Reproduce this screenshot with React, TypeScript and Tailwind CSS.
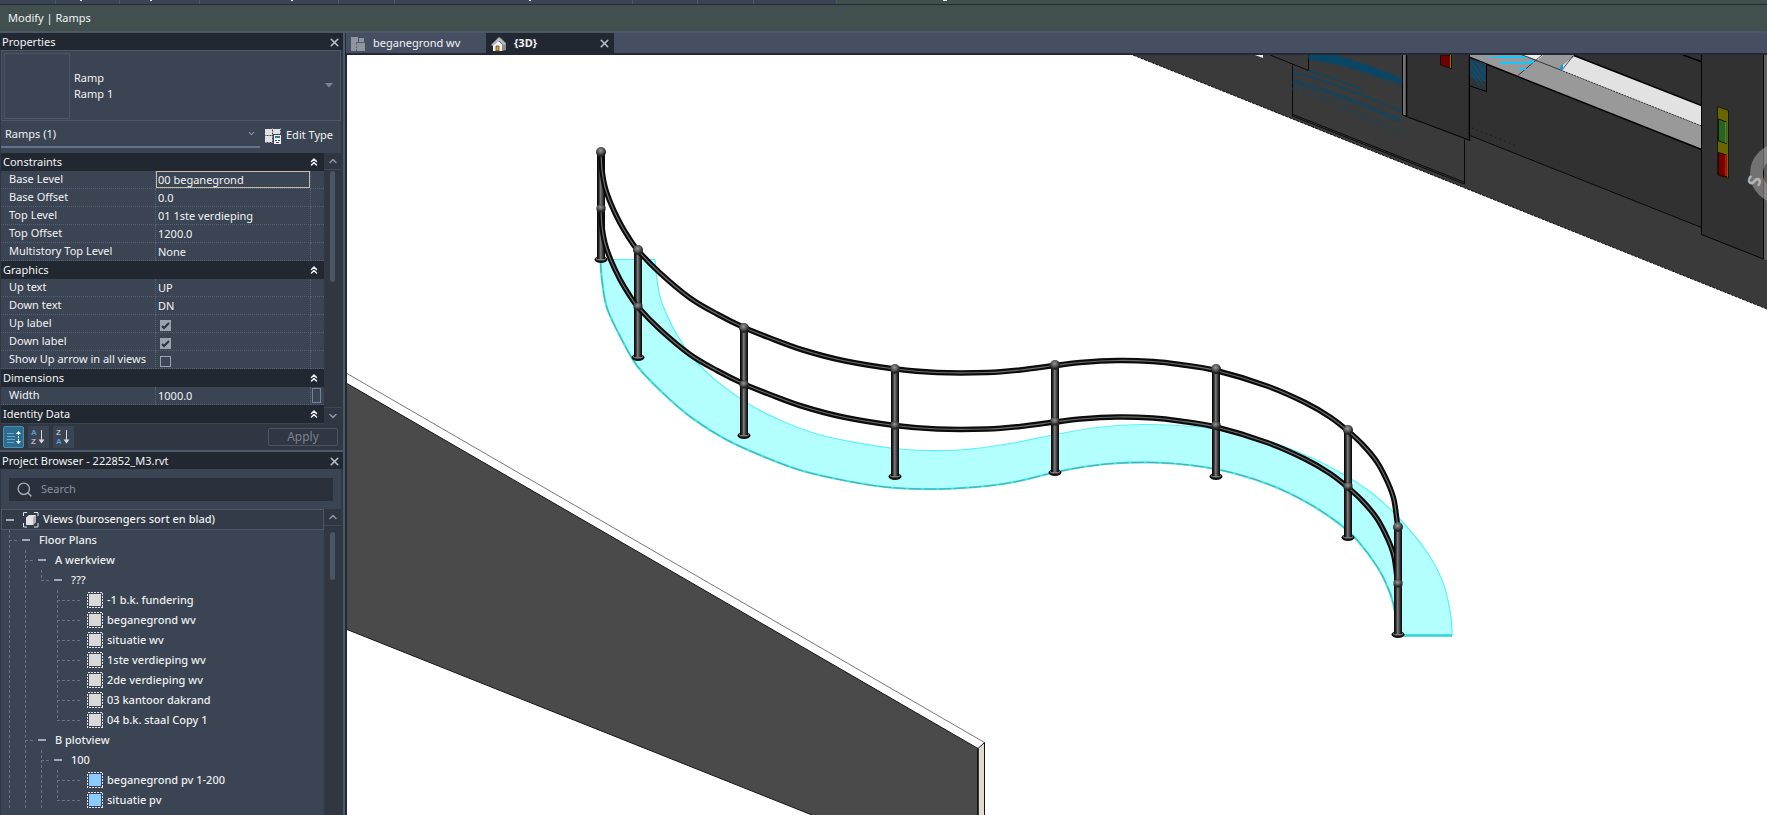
import React from "react";
import { ChevronsUp, ChevronDown, ChevronUp, Search, X } from "lucide-react";

type Row = {
  label: string;
  value?: string;
  checked?: boolean;
  active?: boolean;
  picker?: boolean;
};

const groups: { name: string; rows: Row[] }[] = [
  {
    name: "Constraints",
    rows: [
      { label: "Base Level", value: "00 beganegrond", active: true },
      { label: "Base Offset", value: "0.0" },
      { label: "Top Level", value: "01 1ste verdieping" },
      { label: "Top Offset", value: "1200.0" },
      { label: "Multistory Top Level", value: "None" },
    ],
  },
  {
    name: "Graphics",
    rows: [
      { label: "Up text", value: "UP" },
      { label: "Down text", value: "DN" },
      { label: "Up label", checked: true },
      { label: "Down label", checked: true },
      { label: "Show Up arrow in all views", checked: false },
    ],
  },
  { name: "Dimensions", rows: [{ label: "Width", value: "1000.0", picker: true }] },
  { name: "Identity Data", rows: [] },
];

type Node = {
  text: string;
  depth: number;
  through: number[];
  last?: boolean;
  icon?: "grey" | "blue";
};

const nodes: Node[] = [
  { text: "Floor Plans", depth: 1, through: [] },
  { text: "A werkview", depth: 2, through: [0] },
  { text: "???", depth: 3, through: [0, 1], last: true },
  { text: "-1 b.k. fundering", depth: 4, through: [0, 1], icon: "grey" },
  { text: "beganegrond wv", depth: 4, through: [0, 1], icon: "grey" },
  { text: "situatie wv", depth: 4, through: [0, 1], icon: "grey" },
  { text: "1ste verdieping wv", depth: 4, through: [0, 1], icon: "grey" },
  { text: "2de verdieping wv", depth: 4, through: [0, 1], icon: "grey" },
  { text: "03 kantoor dakrand", depth: 4, through: [0, 1], icon: "grey" },
  { text: "04 b.k. staal Copy 1", depth: 4, through: [0, 1], icon: "grey", last: true },
  { text: "B plotview", depth: 2, through: [0] },
  { text: "100", depth: 3, through: [0, 1] },
  { text: "beganegrond pv 1-200", depth: 4, through: [0, 1, 2], icon: "blue" },
  { text: "situatie pv", depth: 4, through: [0, 1, 2], icon: "blue", last: true },
];

function Guides({ node }: { node: Node }) {
  const own = 9 + (node.depth - 1) * 16;
  const width = node.icon ? own + 30 : own + 13;
  return (
    <svg width={width} height="20" className="shrink-0" stroke="#6b7280" strokeDasharray="3 2" shapeRendering="crispEdges" aria-hidden="true">
      {node.through.map((k) => (
        <path key={k} d={`M${9.5 + k * 16} 0V20`} />
      ))}
      <path d={`M${own + 0.5} 0V${node.last ? 11 : 20}`} />
      <path d={`M${own} 10.5H${own + (node.icon ? 25 : 9)}`} />
    </svg>
  );
}

function Minus() {
  return <span className="h-[2px] w-[8px] shrink-0 bg-[#a3abb8]" />;
}

function SheetIcon({ kind }: { kind: "grey" | "blue" }) {
  return (
    <svg width="16" height="16" className="shrink-0" shapeRendering="crispEdges" aria-hidden="true">
      <rect x="0.5" y="0.5" width="15" height="15" fill="none" stroke="#e5e5e5" strokeDasharray="2 1" />
      <rect x="2" y="2" width="12" height="12" fill={kind === "grey" ? "#d9d9d9" : "#8accff"} />
    </svg>
  );
}

const slug = (s: string) => s.toLowerCase().replace(/[^a-z0-9]+/g, "-");

function PropertyTable() {
  return (
    <table className="w-full table-fixed border-separate border-spacing-0">
      <colgroup>
        <col />
        <col className="w-[155px]" />
        <col className="w-[13px]" />
      </colgroup>
      {groups.map((g) => (
        <tbody key={g.name}>
          <tr className="h-[18px] bg-[#222831]">
            <th colSpan={3} className="p-0 font-normal">
              <button className="flex h-[18px] w-full items-center justify-between pr-[4px] pl-[2px]">
                <span>{g.name}</span>
                <ChevronsUp size={12} strokeWidth={3} />
              </button>
            </th>
          </tr>
          {g.rows.map((r) => (
            <tr key={r.label} className="h-[18px]">
              <td className="border-r border-b border-dotted border-[#566070] p-0 pl-[8px]">
                <label htmlFor={slug(r.label)} className="block h-[17px] whitespace-nowrap leading-[16px]">
                  {r.label}
                </label>
              </td>
              <td className="border-r border-b border-dotted border-[#566070] p-0">
                {r.value !== undefined ? (
                  <input
                    id={slug(r.label)}
                    defaultValue={r.value}
                    className={
                      r.active
                        ? "block h-[17px] w-full border border-[#c8bda8] pl-[1px] leading-[14px] outline-none"
                        : "block h-[17px] w-full pl-[2px] leading-[16px] outline-none"
                    }
                  />
                ) : (
                  <span className="relative flex h-[17px] items-center pt-[3px] pl-[4px]">
                    <input
                      id={slug(r.label)}
                      type="checkbox"
                      defaultChecked={r.checked}
                      className="size-[11px] appearance-none border border-[#9ca3b0] checked:bg-[#9ca3b0]"
                    />
                    {r.checked && (
                      <svg viewBox="0 0 11 11" className="pointer-events-none absolute left-[4px] size-[11px]" fill="none" stroke="#2b323e" strokeWidth="2" aria-hidden="true">
                        <path d="M2 6l2 2 5-5" />
                      </svg>
                    )}
                  </span>
                )}
              </td>
              <td className="border-b border-dotted border-[#566070] p-0">
                {r.picker && (
                  <button aria-label="Associate parameter" className="ml-[1px] block h-[15px] w-[9px] border border-[#7482a0]" />
                )}
              </td>
            </tr>
          ))}
        </tbody>
      ))}
    </table>
  );
}

function PaneTitle({ children }: { children: React.ReactNode }) {
  return (
    <header className="flex h-[17px] shrink-0 items-center justify-between bg-[#222831] pt-[1px] pr-[2px] pl-[2px]">
      <h2>{children}</h2>
      <button aria-label="Close" className="text-[#b9bfc9]">
        <X size={13} strokeWidth={3} />
      </button>
    </header>
  );
}

function EditTypeIcon() {
  return (
    <svg width="16" height="16" shapeRendering="crispEdges" aria-hidden="true">
      <path d="M0 1h7v6H0zM8 1h7v5H8zM0 8h7v6H0z" fill="#e3e3e3" />
      <path d="M7 0v7M0 7.5h7M15.5 0v6M7.5 8v7M0 14.5h7" stroke="#8d9299" strokeDasharray="2 1" fill="none" />
      <path d="M9 7h7v9H9z" fill="#f2f2f2" />
      <path d="M10 8h5v2h-5z" fill="#2f76b5" />
      <path d="M10 12h2v1h-2zM13 12h2v1h-2zM11 14h3v1h-3z" fill="#44506a" />
    </svg>
  );
}

function SortIcon({ top, bottom }: { top: string; bottom: string }) {
  return (
    <svg width="21" height="22" className="font-['Liberation_Sans',sans-serif]" aria-hidden="true">
      <text x="3" y="9" fontSize="8" fontWeight="bold" fill={top === "A" ? "#5b9bd5" : "#b6bcc6"}>
        {top}
      </text>
      <text x="3" y="18" fontSize="8" fontWeight="bold" fill={bottom === "A" ? "#5b9bd5" : "#b6bcc6"}>
        {bottom}
      </text>
      <path d="M13.500 4v12" stroke="#d5d9df" strokeWidth="1" />
      <path d="M10.500 13.500h6l-3 4z" fill="#d5d9df" />
    </svg>
  );
}

function Properties() {
  return (
    <section className="flex flex-col bg-[#303642]">
      <PaneTitle>Properties</PaneTitle>
      <div className="mr-[2px] ml-[1px] bg-[#3b4452]">
        <button className="flex h-[71px] w-full items-center border border-[#4b5868] pl-[2px] text-left">
          <span className="size-[66px] border border-[#4b5868]" />
          <span className="grow pl-[4px] leading-[16px]">
            Ramp
            <br />
            Ramp 1
          </span>
          <svg width="8" height="5" className="mr-[7px]" aria-hidden="true">
            <path d="M0 0h8L4 4.500z" fill="#76849c" />
          </svg>
        </button>
        <div className="flex h-[32px] items-start">
          <div className="relative flex h-[27px] w-[259px] items-center border-b-2 border-[#64728c]">
            <select aria-label="Filter" className="h-[25px] w-full appearance-none pt-[2px] pl-[4px] outline-none">
              <option>Ramps (1)</option>
            </select>
            <ChevronDown size={9} strokeWidth={3} className="pointer-events-none absolute right-[4px] text-[#8592aa]" />
          </div>
          <button className="ml-[5px] flex h-[29px] items-center gap-[5px] whitespace-nowrap">
            <EditTypeIcon />
            Edit Type
          </button>
        </div>
        <div className="flex h-[271px]">
          <div className="min-w-0 grow">
            <PropertyTable />
          </div>
          <div className="flex w-[17px] shrink-0 flex-col items-center bg-[#303642]">
            <button aria-label="Scroll up" className="flex h-[17px] w-full items-center justify-center border-b border-[#3f4958] text-[#8c96a6]">
              <ChevronUp size={12} strokeWidth={3} />
            </button>
            <span className="mt-[1px] h-[111px] w-[5px] rounded-full bg-[#4b5563]" />
            <button aria-label="Scroll down" className="mt-auto flex h-[17px] w-full items-center justify-center border-t border-[#3f4958] text-[#8c96a6]">
              <ChevronDown size={12} strokeWidth={3} />
            </button>
          </div>
        </div>
      </div>
      <footer className="flex h-[26px] items-center gap-[4px] pr-[5px] pl-[3px]">
        <button aria-label="Group by category" className="rounded-xs border border-[#4790b4] bg-[#2f6d8e]">
          <svg width="19" height="20" aria-hidden="true">
            <path d="M3 6.500h7M3 9.500h8M3 12.500h8M3 15.500h7" stroke="#6aa5c3" />
            <path d="M14.500 6v9" stroke="#e8eef2" strokeDasharray="2 1" />
            <path d="M12 7h5l-2.500-3zM12 14h5l-2.500 3z" fill="#fff" />
          </svg>
        </button>
        <button aria-label="Sort ascending" className="bg-[#3b4452]">
          <SortIcon top="A" bottom="Z" />
        </button>
        <button aria-label="Sort descending" className="bg-[#3b4452]">
          <SortIcon top="Z" bottom="A" />
        </button>
        <button className="ml-auto h-[18px] w-[70px] rounded-xs border border-[#4b5563] text-xs leading-[16px] text-[#7b8290]">Apply</button>
      </footer>
    </section>
  );
}

function ProjectBrowser() {
  return (
    <section className="flex min-h-0 grow flex-col border-t-2 border-[#4b5a6b] bg-[#303642]">
      <PaneTitle>Project Browser - 222852_M3.rvt</PaneTitle>
      <div className="mr-[2px] ml-[1px] flex min-h-0 grow flex-col bg-[#3b4452]">
        <div className="mx-[8px] mt-[9px] mb-[8px] flex h-[23px] shrink-0 items-center gap-[8px] bg-[#2b313c] pl-[7px]">
          <Search size={17} strokeWidth={2} className="text-[#a7adb7]" />
          <input aria-label="Search" placeholder="Search" className="grow outline-none placeholder:text-[#8b919b]" />
        </div>
        <div className="flex min-h-0 grow">
          <ul className="min-w-0 grow overflow-hidden font-medium text-[#eceef0]">
            <li>
              <button className="flex h-[21px] w-full items-center border border-[#4b5868] bg-[#343b48] pl-[4px] whitespace-nowrap">
                <Minus />
                <svg width="16" height="16" className="mr-[4px] ml-[9px]" aria-hidden="true">
                  <path d="M0.500 4V0.500H4M11 0.500h4V4M15 11v4h-4M4 15H0.500v-4" fill="none" stroke="#dfe2e6" />
                  <path d="M3 5.500L6 3h7v7l-3 3H3z" fill="#e4e4e4" />
                  <path d="M10 5.500L13 3v7l-3 3z" fill="#aeb2b8" />
                </svg>
                Views (burosengers sort en blad)
              </button>
            </li>
            {nodes.map((n) => (
              <li key={n.text}>
                <button className="-ml-px flex h-[20px] items-center whitespace-nowrap">
                  <Guides node={n} />
                  <span className="flex items-center gap-[9px]">
                    {n.icon ? (
                      <span className="flex items-center gap-[4px]">
                        <SheetIcon kind={n.icon} />
                        {n.text}
                      </span>
                    ) : (
                      <>
                        <Minus />
                        {n.text}
                      </>
                    )}
                  </span>
                </button>
              </li>
            ))}
          </ul>
          <div className="flex w-[17px] shrink-0 flex-col items-center bg-[#303642]">
            <button aria-label="Scroll up" className="flex h-[17px] w-full items-center justify-center border-b border-[#3f4958] text-[#8c96a6]">
              <ChevronUp size={12} strokeWidth={3} />
            </button>
            <span className="mt-[6px] h-[48px] w-[5px] rounded-full bg-[#4b5563]" />
          </div>
        </div>
      </div>
    </section>
  );
}

type Point = [number, number];

// Catmull-Rom spline through the points, written as cubic segments.
function smooth(pts: Point[]) {
  let d = `M${pts[0][0]} ${pts[0][1]}`;
  for (let i = 0; i < pts.length - 1; i++) {
    const p0 = pts[Math.max(i - 1, 0)];
    const p1 = pts[i];
    const p2 = pts[i + 1];
    const p3 = pts[Math.min(i + 2, pts.length - 1)];
    d += `C${p1[0] + (p2[0] - p0[0]) / 6} ${p1[1] + (p2[1] - p0[1]) / 6} ${p2[0] - (p3[0] - p1[0]) / 6} ${p2[1] - (p3[1] - p1[1]) / 6} ${p2[0]} ${p2[1]}`;
  }
  return d;
}

const rail = smooth([
  [601, 152], [602, 170], [605, 187], [611, 204], [620, 223], [629, 238], [638, 250.5], [660, 273], [690, 298], [717, 314],
  [744, 327.5], [770, 338], [803, 350], [843, 360.5], [895, 369], [937, 372.5], [987, 372.5], [1020, 370],
  [1055, 365.5], [1080, 362.5], [1117, 360.5], [1153, 361.5], [1180, 364.5], [1216, 370.5], [1267, 386],
  [1305, 402.5], [1330, 417], [1348, 431], [1363, 445], [1377, 462], [1388, 483], [1394, 500], [1397.5, 525],
]);

const posts: Point[] = [
  [601, 152], [638, 250], [744, 328], [895, 369], [1055, 365], [1216, 369], [1348, 430], [1398, 527],
];

const front = smooth([
  [600.5, 261], [602, 280], [607, 308], [622, 340], [638, 367], [665, 395], [692, 418], [727, 440], [767, 458],
  [803, 471], [847, 481], [890, 487.5], [940, 489], [987, 486], [1017, 481.5], [1050, 473.5], [1080, 467.5],
  [1113, 463.5], [1153, 462.5], [1193, 465.5], [1233, 473], [1273, 486], [1307, 502.5], [1337, 522], [1357, 540],
  [1378, 568], [1390, 593], [1395, 612], [1398, 636],
]);
const back = smooth([
  [1452, 636], [1451.5, 623], [1449, 605], [1442, 580], [1427, 552], [1398, 517], [1373, 494], [1347, 476.5],
  [1313, 458.5], [1273, 442.5], [1233, 432], [1193, 426.5], [1143, 424.5], [1097, 427.5], [1053, 435], [1013, 443],
  [980, 448], [950, 450.5], [900, 449], [853, 442], [817, 434], [783, 421.5], [747, 403], [713, 378], [693, 358],
  [677, 335], [662, 303], [657, 280], [655, 259.5],
]);

function Rail({ dy }: { dy: number }) {
  return (
    <g transform={`translate(0 ${dy})`} fill="none" strokeLinejoin="round">
      <path d={rail} stroke="#0c0c0c" strokeWidth="5.500" />
      <path d={rail} stroke="#6e6e6e" strokeWidth="1.200" />
    </g>
  );
}

function Scene() {
  return (
    <svg viewBox="347 55 1420 760" preserveAspectRatio="xMinYMin slice" className="min-h-0 w-full flex-1 bg-white" role="img" aria-label="3D view">
      <defs>
        <linearGradient id="post">
          <stop offset="0" stopColor="#000" />
          <stop offset="0.250" stopColor="#2b2b2b" />
          <stop offset="0.450" stopColor="#7c7c7c" />
          <stop offset="0.750" stopColor="#333" />
          <stop offset="1" stopColor="#000" />
        </linearGradient>
        <radialGradient id="ball" cx="0.450" cy="0.350">
          <stop offset="0" stopColor="#969696" />
          <stop offset="0.650" stopColor="#555" />
          <stop offset="1" stopColor="#262626" />
        </radialGradient>
      </defs>

      <path d="M1133 55L1767 309V55z" fill="#3a3a3a" />
      <path d="M1133 55L1767 309" stroke="#111" strokeDasharray="3 1" />
      <path d="M1255 55l8 3v-3z" fill="#eee" />
      <path d="M1270 55L1308.500 70.500V55M1292.500 64V116L1464.500 184V139M1293 114.500L1464 182" fill="none" stroke="#0a0a0a" />

      <g stroke="#0a4767" fill="#0a4767">
        <path d="M1309 55h26l45 15 22 10v3l-26-8-30-9-37-7z" />
        <path d="M1345 62l40 14 17 6" strokeWidth="9" fill="none" strokeDasharray="1 1.500" />
        <path d="M1293 73l22 5 44 16 45 18 35 14 25 12" fill="none" strokeWidth="1.500" strokeDasharray="14 1" />
        <path d="M1293 81l30 9 38 14 40 17" fill="none" strokeWidth="4" strokeDasharray="2 1 1 1" />
        <path d="M1293 87l40 15 40 18 35 16" fill="none" strokeWidth="7" strokeDasharray="1 4" opacity="0.600" />
        <path d="M1309 71l24 7 30 12" fill="none" strokeWidth="1.500" strokeDasharray="6 1" />
      </g>

      <path d="M1406 55V116.500L1469 140V55z" fill="#313131" />
      <path d="M1403 55h3v60h-3z" fill="#737373" />
      <path d="M1402.500 55V115L1469 140" fill="none" stroke="#000" />
      <path d="M1406.500 55V116M1469.500 55V141" stroke="#000" strokeWidth="1.500" />
      <path d="M1440.500 55V65L1451.500 68.500V55z" fill="#6f0000" stroke="#111" />
      <path d="M1450.500 55V68" stroke="#807a00" />

      <path d="M1470 55V136L1701.500 227.500V55z" fill="#313131" />
      <path d="M1470 135.500L1701.500 227.500" stroke="#0a0a0a" />
      <path d="M1472 128l45 18" stroke="#111" strokeDasharray="1 4" />
      <path d="M1470 55V57.500L1701.500 149.500V126L1563 71 1574 55z" fill="#999" />
      <path d="M1470 57.500L1701.500 149.500" stroke="#000" strokeWidth="1.500" />
      <path d="M1574 56L1701.500 105V126L1563 71V65z" fill="#e2e2e2" />
      <path d="M1574 55.500L1701.500 105.500" stroke="#000" strokeWidth="1.500" />
      <path d="M1563 71L1701.500 126" stroke="#333" strokeDasharray="2 1" />
      <path d="M1683 55l18 6.500" stroke="#000" strokeWidth="1.500" />
      <path d="M1524 55l14 5 5-5z" fill="#ececec" />
      <path d="M1522 55L1562 70.500M1518 75.500L1542 55M1562 70L1573 56" fill="none" stroke="#222" strokeWidth="0.800" />
      <path d="M1483 56h40l6 2h-28zM1500 62h26l8-2v3l-6 1h-28zM1519 68h7v2h-7z" fill="#14c8ff" />
      <path d="M1560 66.500l3-3v7l-3-1z" fill="#189be8" />
      <path d="M1470 58.500L1486 64V91.500L1470 86z" fill="#2d3438" />
      <path d="M1470 58.500L1486 64V82L1470 77z" fill="#1d4358" />
      <path d="M1471 62l14 19M1471 68l13 18M1476 62l9 12M1471 74l9 12" stroke="#0a5480" />
      <path d="M1486.500 64V91.500L1470 86" fill="none" stroke="#000" />

      <path d="M1701.500 55V234.500L1763.500 259V55z" fill="#313131" />
      <path d="M1763.500 55H1767V260.500L1763.500 259z" fill="#606060" />
      <path d="M1701.500 55V234.500L1763.500 259V55" fill="none" stroke="#050505" />
      <path d="M1717.500 106.500L1728.500 110.500V178.500L1717.500 175z" fill="#6b6700" stroke="#1a1a00" />
      <path d="M1718.500 119L1726.500 122V143.500L1718.500 141z" fill="#28641f" stroke="#0d1f0a" />
      <path d="M1726 122V143" stroke="#58a848" />
      <path d="M1718.500 152.500L1726.500 155V177L1718.500 174.500z" fill="#760000" stroke="#1f0505" />
      <path d="M1726 155V176" stroke="#e01010" strokeWidth="1.500" />
      <circle cx="1780" cy="173.500" r="23.500" fill="none" stroke="#a8a8a8" strokeOpacity="0.550" strokeWidth="13" />
      <text x="1755" y="181" fontSize="18" fontWeight="bold" fill="#b4b4b4" textAnchor="middle" dominantBaseline="central" transform="rotate(105 1755 181)">
        S
      </text>

      <path d="M347 383.500L978 748.500V815H812L347 629.500z" fill="#4a4a4a" />
      <path d="M978 748.500l6.500-6V815H978z" fill="#e3dacf" />
      <path d="M347 373.500L984.500 742.500" stroke="#555" strokeWidth="0.800" />
      <path d="M347 383.500L978 748.500L984.500 742.500V815M347 629.500L812 815" fill="none" stroke="#151515" />
      <path d="M978 748.500V815" stroke="#000" strokeWidth="1.500" />

      <path d={`${front}L${back.slice(1)}L606 259.5z`} fill="#b3ffff" />
      <path d={`${back}H612`} fill="none" stroke="#5df3f3" strokeWidth="1.200" />
      <path d={front} fill="none" stroke="#3fe6e6" strokeWidth="2.200" />
      <path d={front} fill="none" stroke="#5d9c9c" strokeWidth="0.900" strokeDasharray="12 3" />
      <path d="M1398 635.500H1452" stroke="#2fd5d5" strokeWidth="2.500" />

      {posts.map(([x, y]) => (
        <g key={x}>
          <ellipse cx={x} cy={y + 107.5} rx="6.500" ry="3.500" fill="#111" />
          <ellipse cx={x} cy={y + 106.5} rx="5" ry="2" fill="#7a7a7a" />
          <rect x={x - 4} y={y} width="8" height="107" fill="url(#post)" />
        </g>
      ))}
      <Rail dy={0} />
      <Rail dy={56.5} />
      <rect x="1394" y="530" width="8" height="103" fill="url(#post)" />
      {posts.map(([x, y]) => (
        <g key={x} fill="url(#ball)">
          <circle cx={x} cy={y} r="5" />
          <rect x={x - 4.5} y={y + 52.5} width="9" height="8" rx="3" />
        </g>
      ))}
    </svg>
  );
}

// Ribbon panels cut off by the window's top edge: width, and where a letter's tail shows.
const ribbonPanels = [
  { width: 56 },
  { width: 64, tail: 24 },
  { width: 80, tail: 30 },
  { width: 139, tail: 91 },
  { width: 56 },
  { width: 238, tail: 134 },
  { width: 65 },
  { width: 56 },
  { width: 83 },
];

export default function App() {
  return (
    <div className="flex h-screen flex-col overflow-hidden bg-[#222835] font-['Noto_Sans','Open_Sans',sans-serif] text-[11px] text-[#f1f3f5]">
      <div className="flex h-[5px] shrink-0 border-b border-[#232a36] bg-[#424f4f]">
        {ribbonPanels.map((p, i) => (
          <span key={i} className="flex shrink-0 border-r border-[#4b5a55] bg-[#3b4454]" style={{ width: p.width, paddingLeft: p.tail }}>
            {p.tail && <span className="h-px w-[2px] bg-[#f1f3f5]" />}
          </span>
        ))}
        <span className="ml-[106px] h-px w-[4px] bg-[#f1f3f5]" />
      </div>
      <div className="flex h-[28px] shrink-0 items-center border-b-2 border-[#4b5866] bg-[#424f4f] pl-[8px]">Modify | Ramps</div>
      <div className="flex min-h-0 grow">
        <aside className="flex w-[345px] shrink-0 flex-col border-r-2 border-[#4b5a6b]">
          <Properties />
          <ProjectBrowser />
        </aside>
        <main className="ml-[2px] flex min-w-0 grow flex-col">
          <nav className="mb-[2px] -ml-px flex h-[20px] shrink-0 bg-[#464f61]">
            <button className="flex w-[140px] items-center gap-[8px] pt-[1px] pl-[5px]">
              <svg width="14" height="14" shapeRendering="crispEdges" aria-hidden="true">
                <path d="M0 0h7v14H0zM8 1h5v4H8zM6 6h8v8H6z" fill="#8f959f" />
                <path d="M5.500 6v8M5 5.500h9" stroke="#5f6673" strokeDasharray="2 1" />
              </svg>
              beganegrond wv
            </button>
            <div className="flex w-[128px] items-center bg-[#222831] pt-[1px] pr-[3px] pl-[5px]">
              <button className="flex grow items-center gap-[7px] font-bold">
                <svg width="16" height="16" aria-hidden="true">
                  <path d="M9 1l6 6v7l-4 1V7z" fill="#8c8c8c" />
                  <path d="M2 8l4-4 5 4v7H2z" fill="#f2f2f2" />
                  <path d="M0 9l8-8 7 7-2 1-5-4-6 5z" fill="#b9bcc0" />
                  <path d="M5 10h3v5H5z" fill="#d9a62e" stroke="#4a3b16" strokeWidth="0.700" />
                </svg>
                {"{3D}"}
              </button>
              <button aria-label="Close tab" className="text-[#b9bfc9]">
                <X size={13} strokeWidth={3} />
              </button>
            </div>
          </nav>
          <Scene />
        </main>
      </div>
    </div>
  );
}
